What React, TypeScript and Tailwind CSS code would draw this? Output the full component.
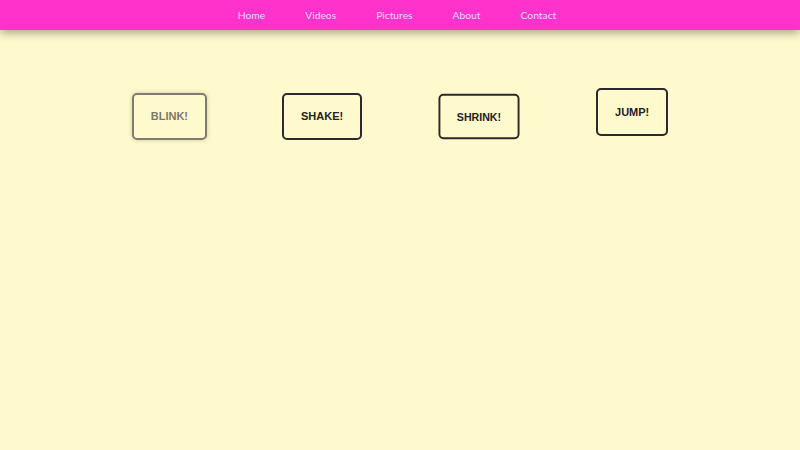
import React from "react";

const btn =
  "border-2 border-[#2a2a2a] rounded-[5px] px-[17px] py-[14px] text-[11px] leading-[14px] font-bold text-[#222] bg-transparent";

export default function App() {
  return (
    <div className="w-[800px] h-[450px] bg-[#fffacd] overflow-hidden" style={{ fontFamily: '"Liberation Sans", Arial, sans-serif' }}>
      <nav className="h-[30px] bg-[#ff33cc] shadow-[0_3px_10px_rgba(0,0,0,0.35)] flex justify-center items-center pr-[6px] relative z-10">
        {["Home", "Videos", "Pictures", "About", "Contact"].map((t) => (
          <a
            key={t}
            className="px-[20px] pt-[1px] text-[10.3px] text-[#ffd6f3]"
            style={{ fontFamily: 'Lato, "Noto Sans", sans-serif' }}
          >
            {t}
          </a>
        ))}
      </nav>
      <div className="flex justify-center items-center gap-[75px] mt-[62px]">
        <button className={`${btn} h-[47px] opacity-60 shadow-[0_0_4px_rgba(0,0,0,0.35)]`}>BLINK!</button>
        <button className={`${btn} h-[47px]`}>SHAKE!</button>
        <button className={`${btn} h-[47px] scale-[0.965]`}>SHRINK!</button>
        <button className={`${btn} h-[48px] -translate-y-[4px]`}>JUMP!</button>
      </div>
    </div>
  );
}
